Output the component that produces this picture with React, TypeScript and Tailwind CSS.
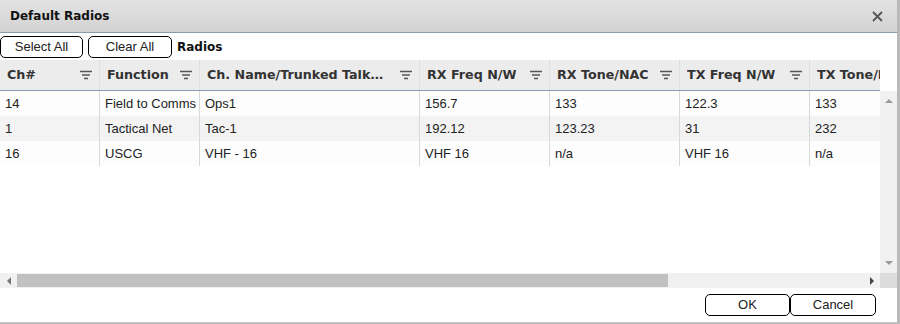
import { type ReactNode } from "react";

interface Column {
  title: string;
  width: string;
}

const COLUMNS: Column[] = [
  { title: "Ch#", width: "w-[100px]" },
  { title: "Function", width: "w-[100px]" },
  { title: "Ch. Name/Trunked Talkgroup", width: "w-[220px]" },
  { title: "RX Freq N/W", width: "w-[130px]" },
  { title: "RX Tone/NAC", width: "w-[130px]" },
  { title: "TX Freq N/W", width: "w-[130px]" },
  { title: "TX Tone/NAC", width: "w-[130px]" },
];

const ROWS: string[][] = [
  ["14", "Field to Comms", "Ops1", "156.7", "133", "122.3", "133"],
  ["1", "Tactical Net", "Tac-1", "192.12", "123.23", "31", "232"],
  ["16", "USCG", "VHF - 16", "VHF 16", "n/a", "VHF 16", "n/a"],
];

function FilterIcon() {
  return (
    <svg width="14" height="12" viewBox="0 0 14 12" className="shrink-0">
      <path d="M1 2.5h12M3 6h8M5 9.5h4" stroke="#555" strokeWidth="1.3" fill="none" />
    </svg>
  );
}

function OutlineButton({ children, className }: { children: ReactNode; className?: string }) {
  return (
    <button
      className={`h-[22px] rounded-[5px] border border-black bg-white font-['Liberation_Sans',sans-serif] text-[13px] text-[#222] ${className ?? ""}`}
    >
      {children}
    </button>
  );
}

function Arrow({ dir }: { dir: "up" | "down" | "left" | "right" }) {
  const vertical = dir === "up" || dir === "down";
  const d = {
    up: "M0 5L4 1L8 5Z",
    down: "M0 1L4 5L8 1Z",
    left: "M5 0L1 4L5 8Z",
    right: "M1 0L5 4L1 8Z",
  }[dir];
  const fill = dir === "right" ? "#444" : dir === "left" ? "#777" : "#999";
  return (
    <svg width={vertical ? 8 : 6} height={vertical ? 6 : 8} viewBox={vertical ? "0 0 8 6" : "0 0 6 8"}>
      <path d={d} fill={fill} />
    </svg>
  );
}

export default function App() {
  return (
    <div className="h-[324px] w-[900px] overflow-hidden bg-[#b9b9b9] font-['DejaVu_Sans',sans-serif] text-[12px] text-[#222]">
      <div className="flex h-[323px] w-[897px] flex-col bg-white">
        {/* Title bar */}
        <div className="flex h-[33px] shrink-0 items-center justify-between border-b border-[#8d9bb0] bg-gradient-to-b from-[#e2e2e2] to-[#d3d3d3] pl-[10px] pr-[14px]">
          <span className="text-[12px] font-bold text-[#111]">Default Radios</span>
          <svg width="11" height="11" viewBox="0 0 11 11">
            <path d="M1 1L10 10M10 1L1 10" stroke="#555" strokeWidth="1.8" />
          </svg>
        </div>

        {/* Toolbar */}
        <div className="flex h-[27px] shrink-0 items-center gap-[5px] pt-[1px]">
          <OutlineButton className="w-[83px]">Select All</OutlineButton>
          <OutlineButton className="w-[84px]">Clear All</OutlineButton>
          <span className="text-[12px] font-bold text-[#111]">Radios</span>
        </div>

        {/* Grid */}
        <div className="flex h-[228px] shrink-0 flex-col">
          <div className="flex h-[213px]">
            <div className="flex w-[880px] flex-col overflow-hidden">
              <div className="flex h-[31px] shrink-0 border-b border-[#8d9bb0] bg-[#ececec]">
                {COLUMNS.map((c) => (
                  <div
                    key={c.title}
                    className={`${c.width} flex shrink-0 items-center justify-between gap-2 border-r border-dotted border-[#d4d4d4] pl-[7px] pr-[6px]`}
                  >
                    <span className="truncate text-[12.7px] font-bold text-[#333]">{c.title}</span>
                    <FilterIcon />
                  </div>
                ))}
              </div>
              <div className="flex flex-1 flex-col bg-white font-['Liberation_Sans',sans-serif]">
                {ROWS.map((r, ri) => (
                  <div key={ri} className={`flex h-[25px] shrink-0 ${ri === 1 ? "bg-[#f3f3f3]" : "bg-[#fdfdfd]"}`}>
                    {r.map((v, ci) => (
                      <div
                        key={ci}
                        className={`${COLUMNS[ci].width} flex shrink-0 items-center overflow-hidden whitespace-nowrap border-r border-[#d9d9d9] pl-[5px] text-[13px]`}
                      >
                        {v}
                      </div>
                    ))}
                  </div>
                ))}
              </div>
            </div>
            {/* Vertical scrollbar */}
            <div className="flex w-[17px] flex-col pt-[31px]">
              <div className="flex flex-1 flex-col items-center justify-between bg-[#f1f1f1] py-[7px]">
                <Arrow dir="up" />
                <Arrow dir="down" />
              </div>
            </div>
          </div>
          {/* Horizontal scrollbar */}
          <div className="flex h-[15px]">
            <div className="flex w-[880px] items-center bg-[#f1f1f1]">
              <div className="flex w-[17px] justify-center">
                <Arrow dir="left" />
              </div>
              <div className="h-[13px] w-[651px] bg-[#c1c1c1]" />
              <div className="flex-1" />
              <div className="flex w-[17px] justify-center">
                <Arrow dir="right" />
              </div>
            </div>
            <div className="w-[17px] bg-[#dcdcdc]" />
          </div>
        </div>

        {/* Footer */}
        <div className="flex flex-1 items-center justify-end border-b border-[#c8c8c8] pr-[21px]">
          <OutlineButton className="w-[85px]">OK</OutlineButton>
          <OutlineButton className="w-[86px]">Cancel</OutlineButton>
        </div>
      </div>
    </div>
  );
}
